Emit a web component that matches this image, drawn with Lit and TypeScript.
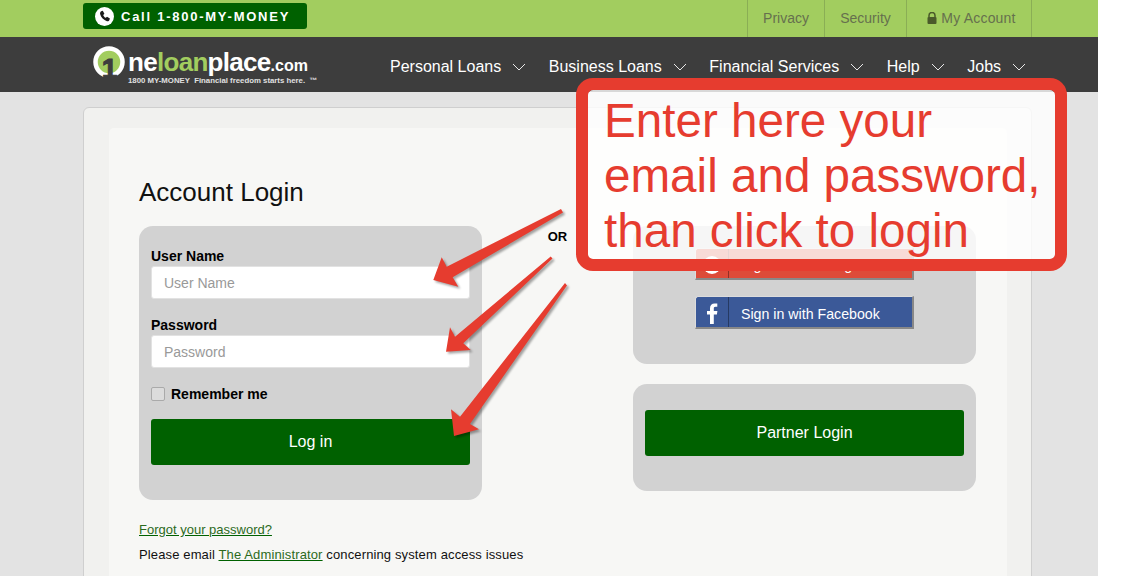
import { LitElement, html, css, svg } from "lit";
import { customElement } from "lit/decorators.js";

const chevron = html`<svg class="chev" width="14" height="8" viewBox="0 0 14 8"><path d="M1 1l6 6 6-6" fill="none" stroke="#e8e8e8" stroke-width="1"/></svg>`;

const arrows = [
  "561,209 446.7,266.7 441.7,257.3 433.3,280 458.3,286.7 452.7,277.3 563,212.5",
  "550.7,256.5 455,336.7 450,327.3 446,351.7 470.7,350 463.3,343.3 552.5,258.5",
  "565,283 460,416.7 451,409.3 454,436 479,429.3 470,424 567,285.5",
];

@customElement("app-root")
export class AppRoot extends LitElement {
  static styles = css`
    :host { display: block; font-family: "Liberation Sans", Arial, sans-serif; background: #fff; }
    * { box-sizing: border-box; }
    .page { position: relative; width: 1098px; height: 576px; overflow: hidden; background: #e3e3e3; color: #000; }
    .top { height: 37px; background: #a2cd5f; }
    .top-in { margin-left: 83px; width: 949px; height: 37px; display: flex; justify-content: space-between; }
    .call { margin-top: 3px; width: 224px; height: 26px; background: #006100; border-radius: 3px; display: flex; align-items: center; padding-left: 12px; gap: 7px; color: #fff; font-weight: 700; font-size: 13px; letter-spacing: 1.75px; white-space: nowrap; }
    .call svg { display: block; }
    .links { display: flex; height: 37px; border-right: 1px solid #8aae55; }
    .links a { display: flex; align-items: center; gap: 4px; justify-content: center; border-left: 1px solid #8aae55; font-size: 14px; color: #66704e; padding-bottom: 2px; }
    .l1 { width: 77px; } .l2 { width: 82px; }
    .links a.l3 { width: 125px; padding-left: 5px; letter-spacing: 0.2px; }
    .bar { height: 55px; background: #3d3d3d; display: flex; }
    .logo { margin-left: 93px; width: 297px; display: flex; }
    .logo-mark { display: block; margin-top: 9px; flex: none; }
    .logo-txt { margin-top: 12px; }
    .wordmark { font-weight: 700; font-size: 26px; line-height: 26px; letter-spacing: -0.7px; color: #fff; white-space: nowrap; }
    .wordmark b { color: #a2cd5f; font-weight: 700; }
    .wordmark i { font-style: normal; font-size: 16px; letter-spacing: 0; }
    .tag { font-size: 7.8px; line-height: 9px; font-weight: 700; color: #e0e0e0; white-space: pre; margin-top: -3px; }
    .nav { display: flex; gap: 22.6px; align-items: center; color: #fff; font-size: 16px; padding-top: 4px; }
    .nav span { display: flex; align-items: center; gap: 11px; white-space: nowrap; }
    .chev { display: block; }
    .card { margin: 15px 0 0 83px; width: 949px; height: 600px; background: #f1f1ef; border: 1px solid #cfcfcf; border-radius: 6px 6px 0 0; padding: 20px 24px 0 25px; }
    .panel { height: 600px; background: #f7f7f5; border-radius: 5px 5px 0 0; padding: 49px 30px 0 30px; }
    h1 { margin: 0 0 19px; font-weight: 400; font-size: 26px; line-height: 30px; color: #111; }
    .cols { display: flex; }
    .col { width: 343px; flex: none; }
    .box { width: 343px; background: #d2d2d2; border-radius: 14px; padding: 0 12px; }
    .login { padding-top: 21px; padding-bottom: 35px; }
    label { display: block; font-size: 14px; line-height: 18px; font-weight: 700; margin-bottom: 1px; }
    input.tx { display: block; width: 319px; height: 33px; background: #fff; border: 1px solid #e2e2e2; border-radius: 3px; padding: 0 12px; font: 14px "Liberation Sans", Arial, sans-serif; margin-bottom: 17px; }
    input.tx::placeholder { color: #999; opacity: 1; }
    .rem { display: flex; align-items: center; gap: 6px; height: 18px; font-size: 14px; font-weight: 700; margin-bottom: 16px; }
    .rem input { appearance: none; margin: 0; width: 14px; height: 14px; background: #dcdcdc; border: 1px solid #aaa; border-radius: 2px; }
    .btn { display: flex; align-items: center; justify-content: center; height: 46px; width: 319px; background: #006100; color: #fff; font-size: 16px; border-radius: 3px; }
    .or { width: 151px; flex: none; padding-top: 3px; text-align: center; font-size: 13px; font-weight: 700; line-height: 15px; }
    .social { padding-top: 22px; height: 138px; display: flex; flex-direction: column; align-items: center; gap: 16px; }
    .sb { width: 219px; height: 33px; flex: none; display: flex; color: #fff; font-size: 14.2px; border: 1px solid #dcdcdc; border-right: 2px solid #888; border-bottom: 2px solid #888; border-radius: 3px 0 0 0; }
    .sb .ic { width: 33px; border-right: 1px solid rgba(0,0,0,.35); display: flex; align-items: center; justify-content: center; padding-top: 2px; }
    .sb .t { padding: 3px 0 0 12px; display: flex; align-items: center; white-space: nowrap; }
    .sb.g { background: #dd4b39; height: 32px; }
    .f { background: #3b5998; }
    .partner { margin-top: 20px; padding-top: 26px; padding-bottom: 35px; }
    .below { margin-top: 21px; font-size: 13px; line-height: 18px; color: #111; white-space: nowrap; }
    .below a { color: #2c6a1c; text-decoration: underline; text-decoration-color: #006100; }
    .below p { margin: 0 0 7px; }
    .below p.mail { letter-spacing: 0.13px; }
    .note { position: absolute; left: 576px; top: 78px; width: 491px; height: 193px; border: 12px solid #e63c2f; border-radius: 17px; background: rgba(255,255,255,.8); background-clip: padding-box; color: #e63c2f; font-size: 47.6px; line-height: 55px; padding: 3px 0 0 16px; white-space: nowrap; }
    .arrows { position: absolute; left: 0; top: 0; filter: drop-shadow(2px 2px 1px rgba(0,0,0,.35)); }
  `;

  render() {
    return html`<div class="page">
      <div class="top"><div class="top-in">
        <div class="call">
          <svg width="19" height="19" viewBox="0 0 19 19"><circle cx="9.5" cy="9.5" r="9.5" fill="#fff"/><path d="M6.200 4.300l1.600-.5 1.600 3-1.200 1.100c.5 1.300 1.400 2.300 2.600 2.900l1.200-1.100 2.900 1.700-.5 1.600c-.3.9-1.400 1.500-2.400 1.200-3.400-1-6-3.700-6.900-7.100-.2-1.100.2-2.300 1.100-2.800z" fill="#1a1a1a"/></svg>
          Call 1-800-MY-MONEY
        </div>
        <div class="links">
          <a class="l1">Privacy</a><a class="l2">Security</a>
          <a class="l3"><svg width="10" height="12" viewBox="0 0 10 12"><path d="M2 5V3.500a3 3 0 0 1 6 0V5" fill="none" stroke="#4a5a2a" stroke-width="1.500"/><rect x="0.500" y="5" width="9" height="7" rx="1" fill="#4a5a2a"/></svg>My Account</a>
        </div>
      </div></div>
      <div class="bar">
        <div class="logo">
          <svg class="logo-mark" width="35" height="40" viewBox="0 0 35 40">
            ${svg`<circle cx="16" cy="16" r="13.500" fill="#a2cd5f" stroke="#fff" stroke-width="4.500"/>
            <text x="16.500" y="32" text-anchor="middle" font-family="Liberation Sans" font-weight="700" font-size="28" stroke="#3d3d3d" stroke-width="1" fill="#3d3d3d">1</text>`}
          </svg>
          <div class="logo-txt">
            <div class="wordmark">ne<b>loan</b>place<i>.com</i></div>
            <div class="tag">1800 MY-MONEY  Financial freedom starts here.  ™</div>
          </div>
        </div>
        <div class="nav">
          <span>Personal Loans ${chevron}</span>
          <span>Business Loans ${chevron}</span>
          <span>Financial Services ${chevron}</span>
          <span>Help ${chevron}</span>
          <span>Jobs ${chevron}</span>
        </div>
      </div>
      <div class="card"><div class="panel">
        <h1>Account Login</h1>
        <div class="cols">
          <div class="col">
            <div class="box login">
              <label>User Name</label>
              <input class="tx" placeholder="User Name" />
              <label>Password</label>
              <input class="tx" type="password" placeholder="Password" />
              <div class="rem"><input type="checkbox" /> Remember me</div>
              <div class="btn">Log in</div>
            </div>
            <div class="below">
              <p><a>Forgot your password?</a></p>
              <p class="mail">Please email <a>The Administrator</a> concerning system access issues</p>
            </div>
          </div>
          <div class="or">OR</div>
          <div class="col">
            <div class="box social">
              <div class="sb g"><div class="ic"><svg width="20" height="20" viewBox="0 0 20 20"><circle cx="10" cy="10" r="9" fill="#fff"/></svg></div><div class="t">Sign in with Google</div></div>
              <div class="sb f"><div class="ic"><svg width="13" height="22" viewBox="0 0 13 22"><path d="M4 22V12.500H1V9h3V6.300C4 3 5.800 1.500 8.700 1.500c1.200 0 2.200.1 2.600.1v3.200H9.500C8 4.800 7.800 5.500 7.800 6.500V9h3.600l-.5 3.500H7.800V22z" fill="#fff"/></svg></div><div class="t">Sign in with Facebook</div></div>
            </div>
            <div class="box partner"><div class="btn">Partner Login</div></div>
          </div>
        </div>
      </div></div>
      <svg class="arrows" width="1098" height="576" viewBox="0 0 1098 576">
        ${arrows.map((p) => svg`<polygon points=${p} fill="#e63c2f"/>`)}
      </svg>
      <div class="note">Enter here your<br />email and password,<br />than click to login</div>
    </div>`;
  }
}
